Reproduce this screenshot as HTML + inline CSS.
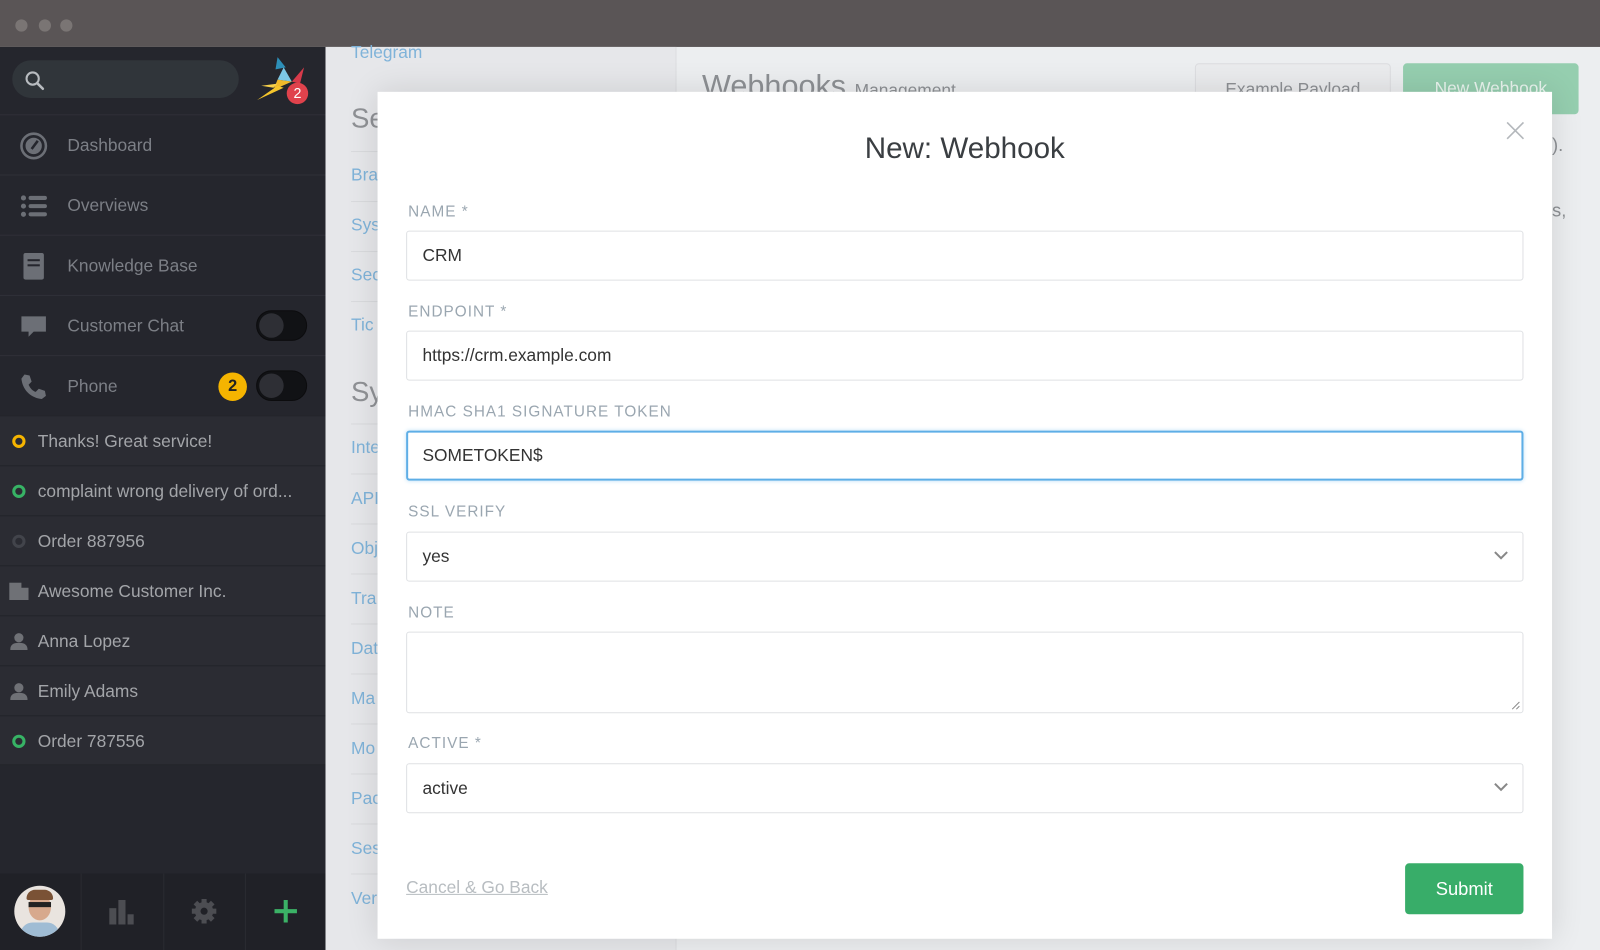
<!DOCTYPE html>
<html><head><meta charset="utf-8">
<style>
*{box-sizing:border-box;margin:0;padding:0}
html,body{width:1600px;height:950px;overflow:hidden;background:#eceef0;font-family:"Liberation Sans",sans-serif}
#w{position:absolute;left:0;top:0;width:1568px;height:931px;transform:scale(1.020408);transform-origin:0 0;overflow:hidden;background:#eceef0}
.abs{position:absolute}
#top{left:0;top:0;width:1568px;height:46px;background:#5a5556}
.dot{width:12px;height:12px;border-radius:50%;background:#7a7574;top:19px}
#side{left:0;top:46px;width:319px;height:885px;background:#25262d}
.nav{position:absolute;left:0;width:319px;height:59px;border-top:1px solid #2f3038;color:#7c7f86;font-size:17px}
.nav span{position:absolute;left:66px;top:20px}
.nav svg{position:absolute;left:19px;top:16px}
.tog{position:absolute;left:251px;top:14px;width:50px;height:30px;border-radius:15px;background:#111215;border:1px solid #0c0c0e}
.tog:after{content:"";position:absolute;left:2px;top:2px;width:24px;height:24px;border-radius:50%;background:#2e2f35}
.it{position:absolute;left:0;width:319px;height:49px;border-top:1px solid #23242a;color:#a3a5a9;font-size:17px;background:#2b2c33}
.it span{position:absolute;left:37px;top:15px}
.ring{position:absolute;left:12px;top:18px;width:13px;height:13px;border-radius:50%;border:3px solid #f5b400}
#mid{left:319px;top:46px;width:343px;height:885px;background:#e6e7ea}
.lk{position:absolute;left:344px;color:#7fb3d9;font-size:17px}
.sep{position:absolute;left:344px;width:318px;height:1px;background:#d9dadd}
#modal{left:370px;top:90px;width:1151px;height:830px;background:#fff;box-shadow:0 0 30px rgba(0,0,0,.12)}
.lb{position:absolute;left:30px;font-size:15px;color:#9aa6b0;letter-spacing:1px}
.in{position:absolute;left:28px;width:1095px;height:49px;border:1px solid #dfe1e4;border-radius:3px;font-size:17px;color:#333;padding:14px 0 0 15px}
.chev{position:absolute;right:14px;top:18px}
</style></head><body><div id="w">
<div id="top" class="abs"></div>
<div class="abs dot" style="left:15px"></div><div class="abs dot" style="left:38px"></div><div class="abs dot" style="left:59px"></div>

<div id="side" class="abs">
 <div class="abs" style="left:12px;top:13px;width:222px;height:37px;border-radius:19px;background:#30353a"></div>
 <svg class="abs" style="left:24px;top:23px" width="20" height="20" viewBox="0 0 20 20"><circle cx="8" cy="8" r="6" fill="none" stroke="#b8bcc0" stroke-width="2"/><path d="M12.5 12.5L18 18" stroke="#b8bcc0" stroke-width="2.5" stroke-linecap="round"/></svg>
 <svg class="abs" style="left:250px;top:8px" width="52" height="48" viewBox="0 0 52 48"><path d="M22 2l8 10-10 2z" fill="#2d8fb8"/><path d="M28 12l8 14-14-2z" fill="#7dc7e6"/><path d="M36 26l12-14-4 16z" fill="#d83a4a"/><path d="M22 24l14 2-18 8z" fill="#f0b92b"/><path d="M2 44l20-14 6 2z" fill="#f5c52c"/><path d="M6 30l16-2-4 4z" fill="#f7d04a"/></svg>
 <div class="abs" style="left:281px;top:35px;width:21px;height:21px;border-radius:50%;background:#e0424c;color:#fff;font-size:14px;text-align:center;line-height:21px">2</div>
 <div class="nav" style="top:66px"><svg width="28" height="28" viewBox="0 0 28 28"><circle cx="14" cy="14" r="12" fill="none" stroke="#6c6f76" stroke-width="2.5"/><circle cx="14" cy="14" r="8" fill="#6c6f76"/><path d="M12 17l6-8" stroke="#25262d" stroke-width="2.5"/></svg><span>Dashboard</span></div>
 <div class="nav" style="top:125px"><svg width="28" height="28" viewBox="0 0 28 28"><g fill="#6c6f76"><circle cx="4" cy="6" r="2.5"/><circle cx="4" cy="14" r="2.5"/><circle cx="4" cy="22" r="2.5"/><rect x="9" y="4" width="18" height="4" rx="2"/><rect x="9" y="12" width="18" height="4" rx="2"/><rect x="9" y="20" width="18" height="4" rx="2"/></g></svg><span>Overviews</span></div>
 <div class="nav" style="top:184px"><svg width="28" height="28" viewBox="0 0 28 28"><rect x="4" y="1" width="20" height="26" rx="2" fill="#6c6f76"/><rect x="8" y="7" width="12" height="2" fill="#25262d"/><rect x="8" y="12" width="12" height="2" fill="#25262d"/></svg><span>Knowledge Base</span></div>
 <div class="nav" style="top:243px"><svg width="28" height="28" viewBox="0 0 28 28"><path d="M2 4h24v15H14l-5 5v-5H2z" fill="#6c6f76"/></svg><span>Customer Chat</span><div class="tog"></div></div>
 <div class="nav" style="top:302px"><svg width="28" height="28" viewBox="0 0 28 28"><path d="M5 2l5 1 2 6-3 3c2 4 4 6 7 7l3-3 6 2 1 5-4 3C11 25 3 17 2 6z" fill="#6c6f76"/></svg><span>Phone</span><div class="abs" style="left:214px;top:16px;width:28px;height:28px;border-radius:50%;background:#f5b400;color:#222;font-size:16px;font-weight:bold;text-align:center;line-height:28px">2</div><div class="tog"></div></div>
 <div class="it" style="top:361px"><div class="ring"></div><span>Thanks! Great service!</span></div>
 <div class="it" style="top:410px"><div class="ring" style="border-color:#37b365"></div><span>complaint wrong delivery of ord...</span></div>
 <div class="it" style="top:459px"><div class="ring" style="border-color:#42444b"></div><span>Order 887956</span></div>
 <div class="it" style="top:508px"><svg class="abs" style="left:9px;top:16px" width="19" height="17" viewBox="0 0 19 17"><path d="M0 0h12v17H0zM12 5h7v12h-7z" fill="#6f7176"/></svg><span>Awesome Customer Inc.</span></div>
 <div class="it" style="top:557px"><svg class="abs" style="left:10px;top:16px" width="17" height="17" viewBox="0 0 17 17"><circle cx="8.5" cy="5" r="4.5" fill="#6f7176"/><path d="M0 17c0-6 4-7 8.5-7S17 11 17 17z" fill="#6f7176"/></svg><span>Anna Lopez</span></div>
 <div class="it" style="top:606px"><svg class="abs" style="left:10px;top:16px" width="17" height="17" viewBox="0 0 17 17"><circle cx="8.5" cy="5" r="4.5" fill="#6f7176"/><path d="M0 17c0-6 4-7 8.5-7S17 11 17 17z" fill="#6f7176"/></svg><span>Emily Adams</span></div>
 <div class="it" style="top:655px;border-bottom:1px solid #23242a"><div class="ring" style="border-color:#37b365"></div><span>Order 787556</span></div>
 <div class="abs" style="left:0;top:810px;width:319px;height:75px;background:#202127"></div>
 <div class="abs" style="left:79px;top:810px;width:1px;height:75px;background:#2a2b31"></div>
 <div class="abs" style="left:160px;top:810px;width:1px;height:75px;background:#2a2b31"></div>
 <div class="abs" style="left:240px;top:810px;width:1px;height:75px;background:#2a2b31"></div>
 <div class="abs" style="left:14px;top:822px;width:50px;height:50px;border-radius:50%;background:#e9e4df;overflow:hidden"><div class="abs" style="left:14px;top:8px;width:22px;height:26px;border-radius:50%;background:#d7a98d"></div><div class="abs" style="left:12px;top:4px;width:26px;height:10px;border-radius:10px 10px 2px 2px;background:#7a5235"></div><div class="abs" style="left:14px;top:16px;width:22px;height:5px;background:#222"></div><div class="abs" style="left:6px;top:36px;width:38px;height:20px;border-radius:12px 12px 0 0;background:#9fbcd4"></div></div>
 <svg class="abs" style="left:107px;top:834px" width="26" height="26" viewBox="0 0 26 26"><rect x="0" y="10" width="7" height="16" fill="#4c4d52"/><rect x="9" y="2" width="7" height="24" fill="#4c4d52"/><rect x="18" y="16" width="6" height="10" fill="#4c4d52"/></svg>
 <svg class="abs" style="left:187px;top:834px" width="26" height="26" viewBox="0 0 26 26"><g fill="#4c4d52"><circle cx="13" cy="13" r="9"/><g stroke="#4c4d52" stroke-width="5"><path d="M13 1v24M1 13h24M4.5 4.5l17 17M21.5 4.5l-17 17"/></g></g><circle cx="13" cy="13" r="3.5" fill="#202127"/></svg>
 <svg class="abs" style="left:269px;top:836px" width="22" height="22" viewBox="0 0 22 22"><path d="M11 0v22M0 11h22" stroke="#3bb266" stroke-width="4"/></svg>
</div>

<div id="mid" class="abs"></div>
<div class="abs" style="left:662px;top:46px;width:1px;height:885px;background:#dcdde0"></div>
<div class="lk" style="top:42px">Telegram</div>
<div class="abs" style="left:344px;top:101px;font-size:27px;color:#8f9195">Se</div>
<div class="sep" style="top:148px"></div>
<div class="lk" style="top:162px">Bra</div><div class="sep" style="top:197px"></div>
<div class="lk" style="top:211px">Sys</div><div class="sep" style="top:246px"></div>
<div class="lk" style="top:260px">Sec</div><div class="sep" style="top:295px"></div>
<div class="lk" style="top:309px">Tic</div>
<div class="abs" style="left:344px;top:369px;font-size:27px;color:#8f9195">Sy</div>
<div class="sep" style="top:415px"></div>
<div class="lk" style="top:429px">Inte</div><div class="sep" style="top:464px"></div>
<div class="lk" style="top:479px">API</div><div class="sep" style="top:513px"></div>
<div class="lk" style="top:528px">Obj</div><div class="sep" style="top:562px"></div>
<div class="lk" style="top:577px">Tra</div><div class="sep" style="top:611px"></div>
<div class="lk" style="top:626px">Dat</div><div class="sep" style="top:660px"></div>
<div class="lk" style="top:675px">Ma</div><div class="sep" style="top:709px"></div>
<div class="lk" style="top:724px">Mo</div><div class="sep" style="top:758px"></div>
<div class="lk" style="top:773px">Pac</div><div class="sep" style="top:807px"></div>
<div class="lk" style="top:822px">Ses</div><div class="sep" style="top:856px"></div>
<div class="lk" style="top:871px">Ver</div>
<div class="abs" style="left:688px;top:68px;font-size:30px;color:#8d9094">Webhooks <span style="font-size:17px">Management</span></div>
<div class="abs" style="left:1171px;top:62px;width:192px;height:50px;border:1px solid #dcdde0;border-radius:4px;background:#eaebed;color:#8d9094;font-size:17px;text-align:center;padding-top:15px">Example Payload</div>
<div class="abs" style="left:1375px;top:62px;width:172px;height:50px;border-radius:4px;background:#95ceaf;color:#eaf5ef;font-size:17px;text-align:center;padding-top:15px">New Webhook</div>
<div class="abs" style="left:1521px;top:132px;font-size:18px;color:#8d9094">).</div>
<div class="abs" style="left:1521px;top:196px;font-size:18px;color:#8d9094">s,</div>

<div id="modal" class="abs">
 <div class="abs" style="left:0;width:1151px;top:40px;text-align:center;font-size:29px;color:#3a3e42">New: Webhook</div>
 <svg class="abs" style="left:1106px;top:29px" width="18" height="18" viewBox="0 0 18 18"><path d="M1 1l16 16M17 1L1 17" stroke="#b4b8bc" stroke-width="1.6"/></svg>
 <div class="lb" style="top:109px">NAME *</div>
 <div class="in" style="top:136px">CRM</div>
 <div class="lb" style="top:207px">ENDPOINT *</div>
 <div class="in" style="top:234px">https://crm.example.com</div>
 <div class="lb" style="top:305px">HMAC SHA1 SIGNATURE TOKEN</div>
 <div class="in" style="top:332px;border:2px solid #5eaee6;box-shadow:0 0 4px #bfe0f7;padding:13px 0 0 14px">SOMETOKEN$</div>
 <div class="lb" style="top:403px">SSL VERIFY</div>
 <div class="in" style="top:431px">yes<svg class="chev" width="14" height="9" viewBox="0 0 14 9"><path d="M1 1l6 6 6-6" fill="none" stroke="#888" stroke-width="2"/></svg></div>
 <div class="lb" style="top:502px">NOTE</div>
 <div class="in" style="top:529px;height:80px"><svg class="abs" style="right:2px;bottom:2px" width="9" height="9" viewBox="0 0 9 9"><path d="M1 8l7-7M5 8l3-3" stroke="#888"/></svg></div>
 <div class="lb" style="top:630px">ACTIVE *</div>
 <div class="in" style="top:658px">active<svg class="chev" width="14" height="9" viewBox="0 0 14 9"><path d="M1 1l6 6 6-6" fill="none" stroke="#888" stroke-width="2"/></svg></div>
 <div class="abs" style="left:28px;top:770px;font-size:17px;color:#b8bdc1;text-decoration:underline">Cancel &amp; Go Back</div>
 <div class="abs" style="left:1007px;top:756px;width:116px;height:50px;border-radius:4px;background:#38ad69;color:#fff;font-size:18px;text-align:center;padding-top:15px">Submit</div>
</div>
</div></body></html>
